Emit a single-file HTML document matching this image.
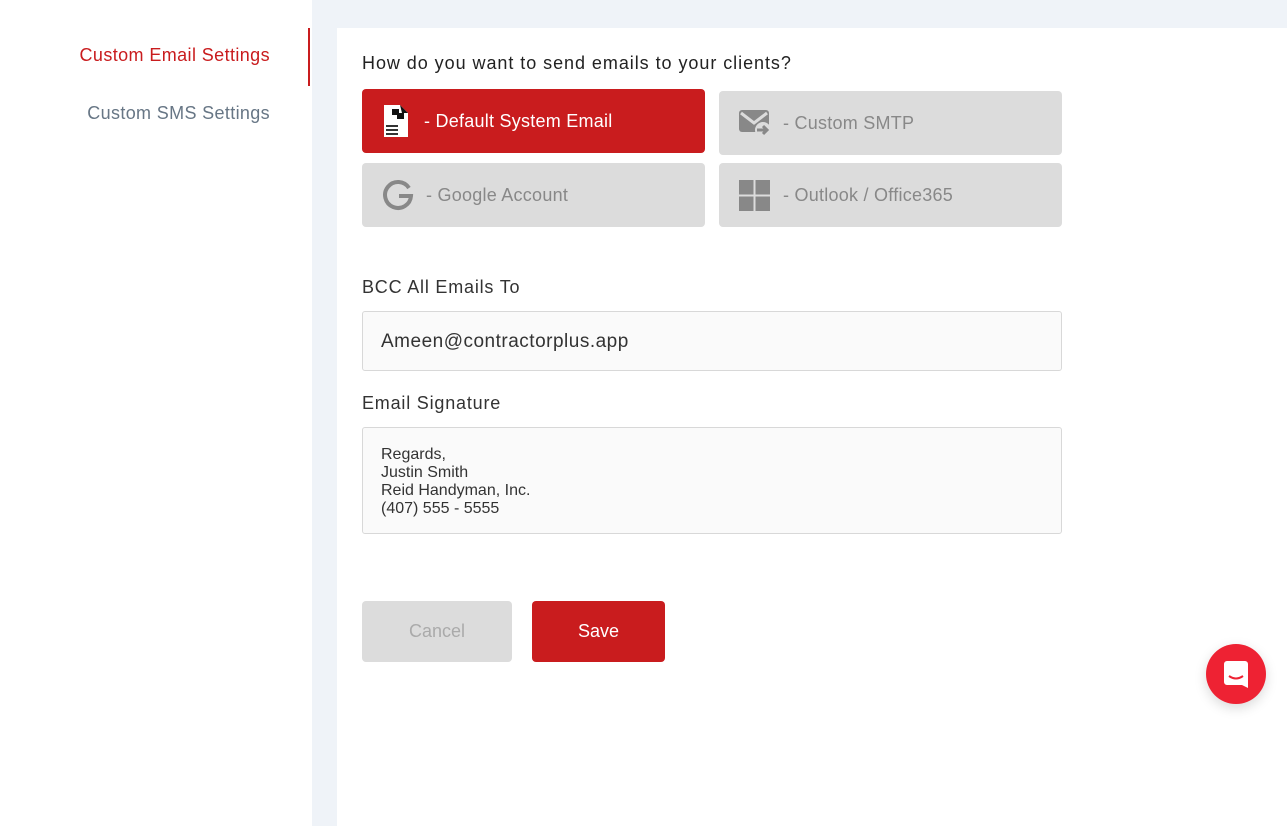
<!DOCTYPE html>
<html><head><style>
*{box-sizing:border-box;margin:0;padding:0}
body{width:1287px;height:826px;background:#eff3f8;font-family:"Liberation Sans",sans-serif;position:relative;overflow:hidden}
.side{position:absolute;left:0;top:0;width:312px;height:826px;background:#fff}
.side .a{position:absolute;right:42px;top:45px;color:#c91c1e;font-size:18px;letter-spacing:.4px}
.side .bar{position:absolute;right:2px;top:28px;width:2px;height:58px;background:#c91c1e}
.side .b{position:absolute;right:42px;top:103px;color:#677685;font-size:18px;letter-spacing:.35px}
.main{position:absolute;left:337px;top:28px;width:950px;height:798px;background:#fff}
.abs{position:absolute}
.q{left:25px;top:25px;font-size:18px;color:#222;letter-spacing:.95px}
.btn{position:absolute;width:343px;height:64px;border-radius:4px;background:#dcdcdc;color:#888;font-size:18px;display:flex;align-items:center;padding-left:20px;letter-spacing:.25px}
.btn svg{margin-right:12px}
.lbl{font-size:18px;color:#333;left:25px;letter-spacing:.8px}
.inp{left:25px;width:700px;border:1px solid #d8d8d8;border-radius:3px;background:#fafafa;color:#333}
</style></head><body>
<div class="side"><div class="a">Custom Email Settings</div><div class="bar"></div><div class="b">Custom SMS Settings</div></div>
<div class="main">
<div class="abs q">How do you want to send emails to your clients?</div>
<div class="btn" style="left:25px;top:61px;background:#c91c1e;color:#fff">
<svg width="30" height="32" viewBox="0 0 30 32"><rect x="2" y="0" width="24" height="32" fill="#fff"/><rect x="10" y="4" width="7" height="6" fill="#111"/><rect x="15" y="8" width="7" height="6" fill="#111"/><polygon points="18,0 26,0 26,8" fill="#c91c1e"/><polygon points="18,0 26,8 20,8" fill="#111"/><rect x="4" y="20" width="12" height="2" fill="#333"/><rect x="4" y="24" width="12" height="2" fill="#333"/><rect x="4" y="28" width="12" height="2" fill="#333"/></svg>- Default System Email</div>
<div class="btn" style="left:382px;top:63px">
<svg width="32" height="30" viewBox="0 0 32 30"><rect x="0" y="2" width="30" height="22" rx="3" fill="#888"/><polyline points="2,5 15,15 28,5" stroke="#dcdcdc" stroke-width="3" fill="none"/><circle cx="24" cy="22" r="8" fill="#dcdcdc"/><path d="M18 22h9m-3-4l4 4-4 4" stroke="#888" stroke-width="3" fill="none"/></svg>- Custom SMTP</div>
<div class="btn" style="left:25px;top:135px">
<svg width="32" height="32" viewBox="0 0 32 32"><path d="M27 9A13 13 0 1 0 29 17H17" stroke="#888" stroke-width="4" fill="none"/></svg>- Google Account</div>
<div class="btn" style="left:382px;top:135px">
<svg width="32" height="32" viewBox="0 0 32 32"><rect x="0" y="1" width="14.5" height="14.5" fill="#888"/><rect x="16.5" y="1" width="14.5" height="14.5" fill="#888"/><rect x="0" y="17.5" width="14.5" height="14.5" fill="#888"/><rect x="16.5" y="17.5" width="14.5" height="14.5" fill="#888"/></svg>- Outlook / Office365</div>
<div class="abs lbl" style="top:249px">BCC All Emails To</div>
<div class="abs inp" style="top:283px;height:60px;font-size:19px;padding:19px 18px;letter-spacing:.5px">Ameen@contractorplus.app</div>
<div class="abs lbl" style="top:365px">Email Signature</div>
<div class="abs inp" style="top:399px;height:107px;font-size:16px;line-height:18px;padding:18px 18px">Regards,<br>Justin Smith<br>Reid Handyman, Inc.<br>(407) 555 - 5555</div>
<div class="abs" style="left:25px;top:573px;width:150px;height:61px;background:#dcdcdc;border-radius:4px;color:#aaa;font-size:18px;text-align:center;line-height:61px">Cancel</div>
<div class="abs" style="left:195px;top:573px;width:133px;height:61px;background:#c91c1e;border-radius:4px;color:#fff;font-size:18px;text-align:center;line-height:61px">Save</div>
</div>
<div class="abs" style="left:1206px;top:644px;width:60px;height:60px;border-radius:50%;background:#ee2233;box-shadow:0 4px 12px rgba(0,0,0,.15)">
<svg width="60" height="60" viewBox="0 0 60 60"><path d="M18 20a3 3 0 0 1 3-3h18a3 3 0 0 1 3 3v24l-6-3H21a3 3 0 0 1-3-3z" fill="#fff"/><path d="M23 32q7 5 14 0" stroke="#ee2233" stroke-width="2" fill="none"/></svg></div>
</body></html>
